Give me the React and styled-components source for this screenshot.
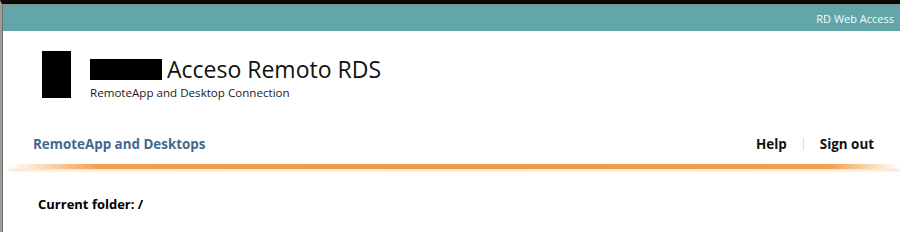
import React from "react";
import styled, { createGlobalStyle } from "styled-components";

const Global = createGlobalStyle`
  html, body {
    margin: 0;
    padding: 0;
    background: #ffffff;
  }
  body {
    font-family: "Open Sans", "Noto Sans", sans-serif;
  }
`;

const Frame = styled.div`
  width: 900px;
  height: 232px;
  box-sizing: border-box;
  border-top: 4px solid #0a0a0a;
  border-left: 2px solid #9c9c9c;
  overflow: hidden;
  background: #fff;
`;

const Inner = styled.div`
  border-top: 1px solid #8a8a8a;
  border-left: 1px solid #6f6f6f;
  height: 100%;
  box-sizing: border-box;
`;

const TopBar = styled.div`
  height: 26px;
  background: #62a6aa;
  display: flex;
  justify-content: flex-end;
  align-items: center;
  padding-right: 6px;
  color: #f4fbfb;
  font-size: 11px;
`;

const Header = styled.div`
  display: flex;
  align-items: flex-start;
  padding: 20px 0 0 39px;
  height: 100px;
  box-sizing: border-box;
`;

const LogoBox = styled.div`
  width: 29px;
  height: 47px;
  background: #000;
`;

const TitleBlock = styled.div`
  margin-left: 19px;
  padding-top: 4px;
`;

const TitleRow = styled.div`
  display: flex;
  align-items: center;
  font-size: 23px;
  line-height: 28px;
  color: #111;
`;

const Redacted = styled.div`
  width: 72px;
  height: 21px;
  background: #000;
  margin-right: 5px;
`;

const Subtitle = styled.div`
  font-size: 11.6px;
  line-height: 15px;
  color: #1a1a1a;
  margin-top: 2px;
`;

const Nav = styled.div`
  display: flex;
  justify-content: space-between;
  align-items: center;
  padding: 0 26px 8px 30px;
  height: 33px;
  box-sizing: border-box;
  font-size: 13.4px;
  font-weight: 700;
`;

const Section = styled.div`
  color: #3f6a8e;
`;

const Links = styled.div`
  display: flex;
  align-items: center;
  color: #111;
`;

const Sep = styled.span`
  width: 1px;
  height: 12px;
  background: #dcdcdc;
  margin: 0 16px;
`;

const Rule = styled.div`
  height: 5px;
  margin-left: 6px;
  background: linear-gradient(
    to right,
    rgba(240, 150, 60, 0) 0%,
    rgba(240, 150, 60, 0.9) 10%,
    #ef9a45 50%,
    rgba(240, 150, 60, 0.9) 92%,
    rgba(240, 150, 60, 0) 100%
  );
  box-shadow: 0 2px 3px rgba(250, 190, 120, 0.45);
`;

const Folder = styled.div`
  padding: 26px 0 0 35px;
  font-size: 13px;
  font-weight: 700;
  color: #000;
`;

export default function App() {
  return (
    <>
      <Global />
      <Frame>
        <Inner>
          <TopBar>RD Web Access</TopBar>
          <Header>
            <LogoBox />
            <TitleBlock>
              <TitleRow>
                <Redacted />
                Acceso Remoto RDS
              </TitleRow>
              <Subtitle>RemoteApp and Desktop Connection</Subtitle>
            </TitleBlock>
          </Header>
          <Nav>
            <Section>RemoteApp and Desktops</Section>
            <Links>
              <span>Help</span>
              <Sep />
              <span>Sign out</span>
            </Links>
          </Nav>
          <Rule />
          <Folder>Current folder: /</Folder>
        </Inner>
      </Frame>
    </>
  );
}
